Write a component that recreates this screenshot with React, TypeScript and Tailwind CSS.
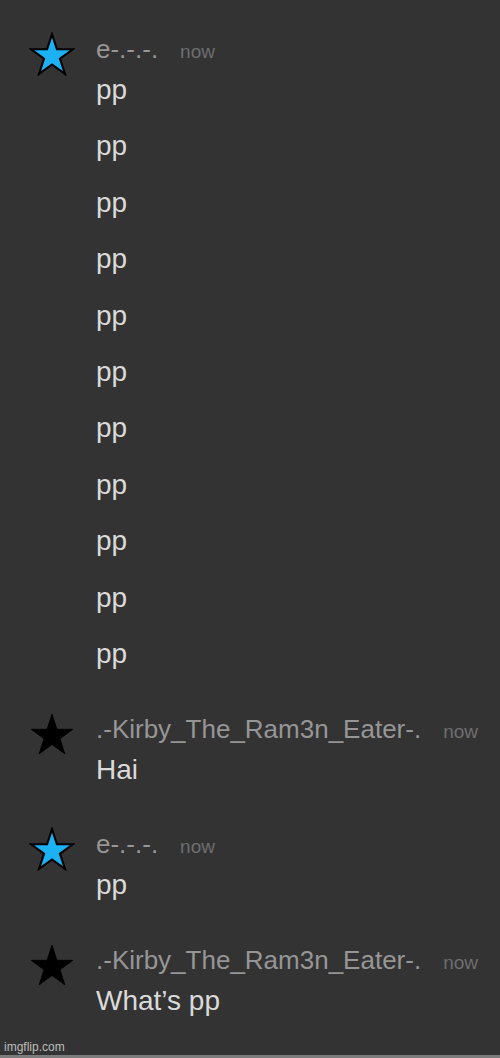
import React from 'react'

type Msg = {
  user: 'e' | 'kirby'
  lines: string[]
  gapTop: string
}

const STAR = '50,0 61.8,36.3 100,36.3 69.1,58.8 80.9,95.1 50,72.6 19.1,95.1 30.9,58.8 0,36.3 38.2,36.3'

function StarAvatar({ blue }: { blue: boolean }) {
  return (
    <svg viewBox="-5 -5 110 105" className="w-[46px] h-[44px] shrink-0">
      <polygon
        points={STAR}
        fill={blue ? '#1cb1f2' : '#000000'}
        stroke="#000000"
        strokeWidth={blue ? 5 : 2}
        strokeLinejoin="miter"
      />
    </svg>
  )
}

const messages: Msg[] = [
  { user: 'e', lines: Array(11).fill('pp'), gapTop: 'mt-[34px]' },
  { user: 'kirby', lines: ['Hai'], gapTop: 'mt-[45px]' },
  { user: 'e', lines: ['pp'], gapTop: 'mt-[44px]' },
  { user: 'kirby', lines: ['What’s pp'], gapTop: 'mt-[45px]' },
]

export default function App() {
  return (
    <div className="relative w-full min-h-[1058px] bg-[#333333] font-['Liberation_Sans',Arial,sans-serif] flex flex-col">
      {messages.map((m, i) => (
        <div key={i} className={`flex gap-[21px] pl-[29px] ${m.gapTop}`}>
          {/* avatar */}
          <div className="-mt-[2px]">
            <StarAvatar blue={m.user === 'e'} />
          </div>

          <div className="flex flex-col">
            <div className="flex items-baseline gap-[22px] leading-[30px]">
              <span className="text-[26px] text-[#969696]">
                {m.user === 'e' ? 'e-.-.-.' : '.-Kirby_The_Ram3n_Eater-.'}
              </span>
              <span className="text-[19px] text-[#6e6e6e]">now</span>
            </div>
            <div className="flex flex-col gap-[26.4px] mt-[8px]">
              {m.lines.map((line, j) => (
                <p key={j} className="text-[28px] leading-[30px] text-[#dadada]">{line}</p>
              ))}
            </div>
          </div>
        </div>
      ))}

      <div className="flex-1" />
      <div className="pl-[4px] pb-[1px] text-[12px] leading-[14px] text-[#bdbdbd]">imgflip.com</div>
      <div className="h-[3px] bg-[#7c7c7c]" />
    </div>
  )
}
